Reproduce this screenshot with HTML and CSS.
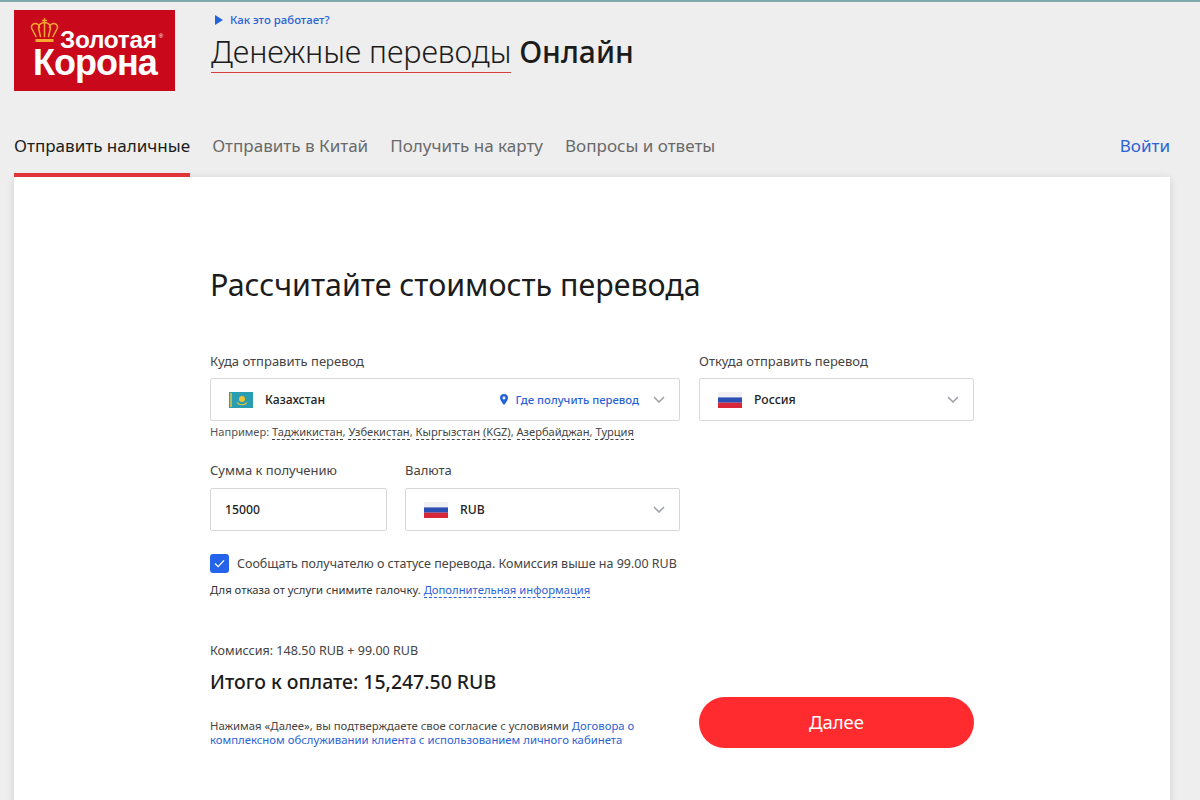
FILE: index.html
```html
<!DOCTYPE html>
<html lang="ru">
<head>
<meta charset="utf-8">
<title>Золотая Корона</title>
<link rel="stylesheet" href="styles.css">
</head>
<body>
<div class="topline"></div>
<div class="page">
  <header class="header">
    <div class="logo">
      <svg class="crown" viewBox="0 0 29 25" width="29" height="25" fill="none" stroke="#f7a830" stroke-width="1.500" stroke-linejoin="round" stroke-linecap="round">
        <path d="M14.500 0.500v4M12.500 2.500h4" stroke-width="1.300"/>
        <path d="M6 18.500 2 11C0 6.500 5 4 8 6.500c1 1 1.500 2 1.500 3M23 18.500 27 11c2-4.500-3-7-6-4.500-1 1-1.500 2-1.500 3"/>
        <path d="M10.500 18.500 8.500 10c0-3.500 3-5.500 6-5.500s6 2 6 5.500l-2 8.500M14.500 4.500v14"/>
        <path d="M5.500 22.500h18" stroke-width="3" stroke-linecap="butt"/>
      </svg>
      <div class="logo-top">Золотая<span class="logo-r">®</span></div>
      <div class="logo-bottom">Корона</div>
    </div>
    <div class="title-block">
      <a class="how"><svg class="how-icon" viewBox="0 0 8 10" width="8" height="10"><path d="M0 0 8 5 0 10z" fill="#2563d9"/></svg>Как это работает?</a>
      <div class="title"><span class="title-light">Денежные переводы</span> <span class="title-bold">Онлайн</span></div>
    </div>
  </header>
  <nav class="tabs">
    <a class="tab active">Отправить наличные</a>
    <a class="tab">Отправить в Китай</a>
    <a class="tab">Получить на карту</a>
    <a class="tab">Вопросы и ответы</a>
    <a class="login">Войти</a>
  </nav>
  <main class="card">
    <h1 class="heading">Рассчитайте стоимость перевода</h1>
    <div class="form">
      <div class="col-left">
        <div class="label">Куда отправить перевод</div>
        <div class="select">
          <svg class="flag" viewBox="0 0 24 16" width="24" height="16">
            <rect width="24" height="16" fill="#2a9db0"/>
            <circle cx="13" cy="7" r="3" fill="#f2c230"/>
            <path d="M8 10.500c2 3 8 3 10 0" stroke="#f2c230" stroke-width="1.200" fill="none"/>
            <path d="M2 1v14" stroke="#e6c44a" stroke-width="1.500"/>
          </svg>
          <span class="select-text">Казахстан</span>
          <a class="where"><svg class="pin" viewBox="0 0 8 11" width="8" height="11"><path fill-rule="evenodd" d="M4 0a4 4 0 0 1 4 4c0 2.500-4 7-4 7S0 6.500 0 4a4 4 0 0 1 4-4zm0 2.600a1.400 1.400 0 1 0 0 2.800 1.400 1.400 0 0 0 0-2.800z" fill="#2563d9"/></svg>Где получить перевод</a>
          <svg class="chevron" viewBox="0 0 12 7" width="12" height="7"><path d="M1 1l5 5 5-5" fill="none" stroke="#9aa0a6" stroke-width="1.500"/></svg>
        </div>
        <div class="hint">Например: <span class="dotted">Таджикистан</span>, <span class="dotted">Узбекистан</span>, <span class="dotted">Кыргызстан (KGZ)</span>, <span class="dotted">Азербайджан</span>, <span class="dotted">Турция</span></div>
        <div class="amount-row">
          <div class="amount">
            <div class="label">Сумма к получению</div>
            <div class="input">15000</div>
          </div>
          <div class="currency">
            <div class="label">Валюта</div>
            <div class="select">
              <svg class="flag" viewBox="0 0 24 16" width="24" height="16"><rect width="24" height="5.400" fill="#f1f1f3"/><rect y="5.400" width="24" height="5.300" fill="#2b4fb3"/><rect y="10.700" width="24" height="5.300" fill="#d8263a"/></svg>
              <span class="select-text">RUB</span>
              <svg class="chevron" viewBox="0 0 12 7" width="12" height="7"><path d="M1 1l5 5 5-5" fill="none" stroke="#9aa0a6" stroke-width="1.500"/></svg>
            </div>
          </div>
        </div>
        <div class="check-row">
          <span class="checkbox"><svg viewBox="0 0 12 10" width="11" height="9"><path d="M1 5l3.500 3.500L11 1.500" fill="none" stroke="#fff" stroke-width="1.500"/></svg></span>
          <span class="check-text">Сообщать получателю о статусе перевода. Комиссия выше на 99.00 RUB</span>
        </div>
        <div class="note">Для отказа от услуги снимите галочку. <a class="info">Дополнительная информация</a></div>
      </div>
      <div class="col-right">
        <div class="label">Откуда отправить перевод</div>
        <div class="select">
          <svg class="flag" viewBox="0 0 24 16" width="24" height="16"><rect width="24" height="5.400" fill="#f1f1f3"/><rect y="5.400" width="24" height="5.300" fill="#2b4fb3"/><rect y="10.700" width="24" height="5.300" fill="#d8263a"/></svg>
          <span class="select-text">Россия</span>
          <svg class="chevron" viewBox="0 0 12 7" width="12" height="7"><path d="M1 1l5 5 5-5" fill="none" stroke="#9aa0a6" stroke-width="1.500"/></svg>
        </div>
      </div>
      <div class="summary">
        <div class="fee">Комиссия: 148.50 RUB + 99.00 RUB</div>
        <div class="total">Итого к оплате: 15,247.50 RUB</div>
        <div class="terms">Нажимая «Далее», вы подтверждаете свое согласие с условиями <a class="terms-link">Договора о комплексном обслуживании клиента с использованием личного кабинета</a></div>
      </div>
      <div class="action"><button class="next">Далее</button></div>
    </div>
  </main>
</div>
</body>
</html>
```
FILE: styles.css
```css
* { box-sizing: border-box; }
html, body { margin: 0; height: 800px; overflow: hidden; }
body {
  background: #eeeeee;
  color: #1c1c1c;
  font-family: "Noto Sans", "Open Sans", sans-serif;
}
a { color: #2b62d6; text-decoration: none; }
.topline { height: 2px; background: #7fa9ad; }
.page { padding: 0 30px 0 14px; }

.header { display: flex; gap: 36px; padding-top: 8px; height: 114px; }
.logo {
  position: relative;
  width: 161px;
  height: 81px;
  padding: 16px 0 0 19px;
  background: #c9081c;
  color: #fff;
  font-family: "Liberation Sans", sans-serif;
  font-weight: 700;
}
.crown { position: absolute; left: 16px; top: 8px; }
.logo-top { margin-left: 27px; height: 20px; font-size: 24.400px; line-height: 20px; letter-spacing: -0.3px; white-space: nowrap; }
.logo-r { margin-left: 2px; font-size: 6px; vertical-align: 10px; font-weight: 400; letter-spacing: 0; }
.logo-bottom { height: 32px; margin-top: 1px; font-size: 36px; line-height: 32px; letter-spacing: -1px; white-space: nowrap; }

.title-block { display: flex; flex-direction: column; align-items: flex-start; }
.how { display: flex; align-items: center; font-size: 11.400px; line-height: 16px; margin: 2px 0 0 4px; font-weight: 500; }
.how-icon { margin-right: 7px; }
.title { font-size: 30px; line-height: 40px; margin-top: 3px; white-space: nowrap; }
.title-light { font-size: 30.700px; font-weight: 300; border-bottom: 1px solid #d8403f; display: inline-block; height: 42px; line-height: 40px; letter-spacing: -0.1px; }
.title-bold { font-weight: 500; margin-left: 0; }

.tabs { display: flex; gap: 22px; height: 61px; align-items: stretch; }
.tab { font-size: 17.050px; line-height: 24px; padding-top: 18px; color: #6a6a6a; white-space: nowrap; }
.tab.active { color: #1c1c1c; border-bottom: 4px solid #e0343a; }
.login { margin-left: auto; font-size: 17.050px; line-height: 24px; padding-top: 18px; }

.card {
  background: #fff;
  height: 640px;
  padding: 89px 0 0 196px;
  box-shadow: 0 1px 8px rgba(0, 0, 0, .12);
}
.heading { margin: 0; font-size: 30.400px; line-height: 38px; font-weight: 400; white-space: nowrap; }

.form {
  display: grid;
  grid-template-columns: 470px 275px;
  column-gap: 19px;
  margin-top: 47px;
}
.label { font-size: 13px; line-height: 20px; color: #444; height: 27px; white-space: nowrap; }
.select {
  display: flex;
  align-items: center;
  height: 43px;
  padding: 0 14px 0 18px;
  border: 1px solid #d8d8d8;
  border-radius: 2px;
  background: #fff;
}
.flag { flex: none; margin-right: 12px; }
.select-text { font-size: 12.200px; font-weight: 500; color: #222; }
.where { display: flex; align-items: center; margin-left: auto; font-size: 11.300px; font-weight: 500; }
.pin { margin-right: 7px; }
.chevron { flex: none; margin-left: auto; }
.where + .chevron { margin-left: 14px; }
.hint { font-size: 11.120px; line-height: 16px; color: #555; margin-top: 3px; white-space: nowrap; }
.dotted { border-bottom: 1px dashed #444; color: #444; }
.amount-row { display: flex; gap: 18px; margin-top: 20px; }
.amount-row .label { height: 28px; }
.amount { width: 177px; }
.currency { flex: 1; }
.input {
  height: 43px;
  padding-left: 14px;
  border: 1px solid #d8d8d8;
  border-radius: 2px;
  font-size: 12.200px;
  font-weight: 500;
  line-height: 41px;
}
.check-row { display: flex; align-items: center; gap: 8px; margin-top: 23px; }
.checkbox {
  display: flex;
  align-items: center;
  justify-content: center;
  flex: none;
  width: 19px;
  height: 19px;
  border-radius: 3px;
  background: #2563eb;
}
.check-text { font-size: 12.480px; line-height: 18px; color: #444; white-space: nowrap; }
.note { font-size: 11.270px; line-height: 16px; color: #333; margin-top: 9px; white-space: nowrap; }
.info { border-bottom: 1px dashed #2b62d6; }

.summary { margin-top: 44px; }
.fee { font-size: 12.550px; line-height: 18px; color: #444; }
.total { font-size: 19.450px; line-height: 28px; font-weight: 500; margin-top: 8px; white-space: nowrap; }
.terms { font-size: 11.330px; line-height: 14px; color: #444; margin-top: 23px; width: 470px; }
.terms-link { color: #2b62d6; }
.action { align-self: end; margin-bottom: -1px; }
.next {
  display: block;
  width: 100%;
  height: 51px;
  padding: 0 0 2px;
  border: 0;
  border-radius: 26px;
  background: #ff2b2f;
  color: #fff;
  font-family: inherit;
  font-size: 18.500px;
  font-weight: 400;
}
```
